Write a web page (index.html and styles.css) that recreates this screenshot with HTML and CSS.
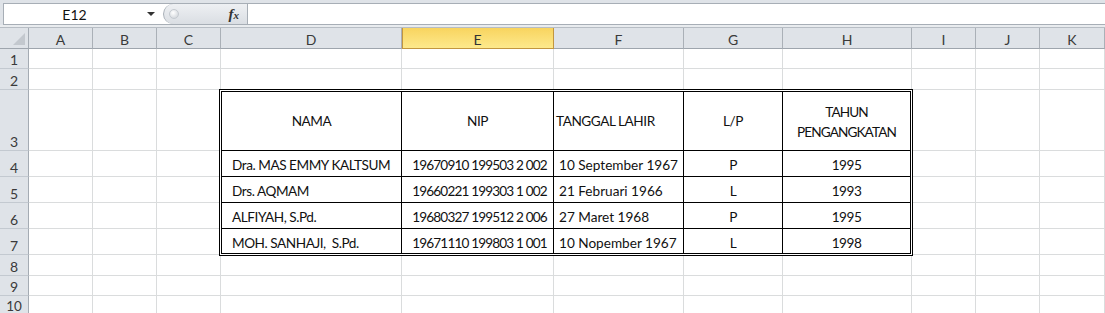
FILE: index.html
```html
<!DOCTYPE html>
<html>
<head>
<meta charset="utf-8">
<link rel="stylesheet" href="styles.css">
</head>
<body>
<div class="app">
  <div class="fbar">
    <div class="fbar-row">
      <div class="namebox"><span class="nb-text">E12</span><span class="nb-arrow"></span></div>
      <div class="capsule"><span class="knob"></span><span class="fx">f<span class="fx-x">x</span></span></div>
      <div class="finput"></div>
    </div>
    <div class="fbar-gap"></div>
  </div>
  <div class="sheet">
    <div class="corner"><svg width="14" height="14" viewBox="0 0 14 14"><polygon points="13,1 13,13 1,13" fill="#c3c8ce"/></svg></div>
    <div class="ch">A</div><div class="ch">B</div><div class="ch">C</div><div class="ch">D</div><div class="ch sel">E</div><div class="ch">F</div><div class="ch">G</div><div class="ch">H</div><div class="ch">I</div><div class="ch">J</div><div class="ch">K</div>

    <div class="tbl">
      <div class="t cc">NAMA</div>
      <div class="t cc">NIP</div>
      <div class="t lh">TANGGAL LAHIR</div>
      <div class="t cc">L/P</div>
      <div class="t cc r two">TAHUN<br>PENGANGKATAN</div>

      <div class="t ln d">Dra. MAS EMMY KALTSUM</div>
      <div class="t cc d nip">19670910 199503 2 002</div>
      <div class="t ld d">10 September 1967</div>
      <div class="t cc d">P</div>
      <div class="t cc d r">1995</div>

      <div class="t ln d">Drs. AQMAM</div>
      <div class="t cc d nip">19660221 199303 1 002</div>
      <div class="t ld d">21 Februari 1966</div>
      <div class="t cc d">L</div>
      <div class="t cc d r">1993</div>

      <div class="t ln d">ALFIYAH, S.Pd.</div>
      <div class="t cc d nip">19680327 199512 2 006</div>
      <div class="t ld d">27 Maret 1968</div>
      <div class="t cc d">P</div>
      <div class="t cc d r">1995</div>

      <div class="t ln d b">MOH. SANHAJI,&nbsp; S.Pd.</div>
      <div class="t cc d b nip">19671110 199803 1 001</div>
      <div class="t ld d b">10 Nopember 1967</div>
      <div class="t cc d b">L</div>
      <div class="t cc d b r">1998</div>
    </div>

    <div class="rh">1</div><div class="c"></div><div class="c"></div><div class="c"></div><div class="c"></div><div class="c"></div><div class="c"></div><div class="c"></div><div class="c"></div><div class="c"></div><div class="c"></div><div class="c"></div>
    <div class="rh">2</div><div class="c"></div><div class="c"></div><div class="c"></div><div class="c"></div><div class="c"></div><div class="c"></div><div class="c"></div><div class="c"></div><div class="c"></div><div class="c"></div><div class="c"></div>
    <div class="rh">3</div><div class="c"></div><div class="c"></div><div class="c"></div><div class="c"></div><div class="c"></div><div class="c"></div>
    <div class="rh">4</div><div class="c"></div><div class="c"></div><div class="c"></div><div class="c"></div><div class="c"></div><div class="c"></div>
    <div class="rh">5</div><div class="c"></div><div class="c"></div><div class="c"></div><div class="c"></div><div class="c"></div><div class="c"></div>
    <div class="rh">6</div><div class="c"></div><div class="c"></div><div class="c"></div><div class="c"></div><div class="c"></div><div class="c"></div>
    <div class="rh">7</div><div class="c"></div><div class="c"></div><div class="c"></div><div class="c"></div><div class="c"></div><div class="c"></div>
    <div class="rh">8</div><div class="c"></div><div class="c"></div><div class="c"></div><div class="c"></div><div class="c"></div><div class="c"></div><div class="c"></div><div class="c"></div><div class="c"></div><div class="c"></div><div class="c"></div>
    <div class="rh">9</div><div class="c"></div><div class="c"></div><div class="c"></div><div class="c"></div><div class="c"></div><div class="c"></div><div class="c"></div><div class="c"></div><div class="c"></div><div class="c"></div><div class="c"></div>
    <div class="rh last">10</div><div class="c"></div><div class="c"></div><div class="c"></div><div class="c"></div><div class="c"></div><div class="c"></div><div class="c"></div><div class="c"></div><div class="c"></div><div class="c"></div><div class="c"></div>
  </div>
</div>
</body>
</html>
```
FILE: styles.css
```css
* { box-sizing: border-box; }
html, body { margin: 0; padding: 0; background: #fff; }
body { font-family: Lato, "Liberation Sans", sans-serif; color: #000; }
.app { width: 1105px; height: 313px; overflow: hidden; background: #fff; }

/* formula bar */
.fbar { height: 28px; background: #dfe3e8; padding: 3px 0 0 3px; display: flex; flex-direction: column; }
.fbar-row { height: 22px; display: flex; background: #fff; border-top: 1px solid #a7aeb6; border-bottom: 1px solid #a7aeb6; border-left: 1px solid #a7aeb6; }
.fbar-gap { flex: 1; margin-left: -3px; background: #e9ecef; border-bottom: 1px solid #b7bdc4; }
.namebox { width: 159px; display: flex; align-items: center; }
.nb-text { width: 141px; text-align: center; font-size: 14px; color: #111; padding-top: 1px; }
.nb-arrow { width: 0; height: 0; margin-left: 2px; border-left: 4px solid transparent; border-right: 4px solid transparent; border-top: 4px solid #333; }
.capsule { width: 85px; display: flex; align-items: center; justify-content: space-between; padding: 0 8px 0 5px; background: linear-gradient(#eef0f3, #dadee3); border-left: 1px solid #a7aeb6; border-right: 1px solid #a7aeb6; border-radius: 10px 0 0 10px; }
.knob { width: 10px; height: 10px; border-radius: 50%; background: radial-gradient(circle at 40% 35%, #ffffff, #c9ced4); border: 1px solid #c5cad0; }
.fx { font-family: "Liberation Serif", serif; font-style: italic; font-weight: bold; font-size: 15px; color: #333; }
.fx-x { font-size: 11px; }
.finput { flex: 1; }

/* sheet */
.sheet { display: grid; grid-template-columns: 29px 64px 64px 64px 181px 152px 130px 99px 129px 64px 64px 65px; grid-template-rows: 21px 20px 21px 61px 26px 26px 26px 26px 21px 20px 18px; }
.corner { background: #dfe3e8; border-right: 1px solid #a4abb3; border-bottom: 1px solid #9ea5ad; display: flex; align-items: flex-end; justify-content: flex-end; padding: 0 2px 2px 0; }
.ch { background: #dfe3e8; border-right: 1px solid #aab0b7; border-bottom: 1px solid #9ea5ad; display: flex; align-items: center; justify-content: center; font-size: 14px; color: #3a3a3a; padding-top: 2px; }
.ch.sel { background: linear-gradient(#f8d45f, #fde98c); border-right: 1px solid #c2963f; border-bottom: 1px solid #c2963f; box-shadow: inset 1px 0 0 #c2963f; color: #333; }
.rh { background: #dfe3e8; border-right: 1px solid #a4abb3; border-bottom: 1px solid #c3c9d0; display: flex; align-items: flex-end; justify-content: center; font-size: 14px; line-height: 16px; color: #3a3a3a; }
.rh.last { border-bottom: 0; line-height: 15px; font-size: 13.5px; }
.c { border-right: 1px solid #dadcdd; border-bottom: 1px solid #dadcdd; }

/* data table */
.tbl { grid-column: 5 / 10; grid-row: 4 / 9; margin: -1px -1px -1px -2px; border: 3px double #000; background: #fff; display: grid; grid-template-columns: 180px 152px 130px 99px 1fr; grid-template-rows: 59px 26px 26px 26px 1fr; position: relative; z-index: 1; }
.t { border-right: 1px solid #000; border-bottom: 1px solid #000; display: flex; align-items: center; font-size: 13.6px; letter-spacing: -0.45px; line-height: 20px; white-space: nowrap; color: #111; }
.t.r { border-right: 0; }
.t.b { border-bottom: 0; }
.t.d { padding-top: 3px; }
.cc { justify-content: center; text-align: center; }
.ln { padding-left: 10px; }
.lh { padding-left: 2px; }
.ld { padding-left: 5px; letter-spacing: 0; }
.nip { letter-spacing: -0.85px; padding-left: 4px; }
.two { padding-top: 1px; letter-spacing: -0.9px; }
```
